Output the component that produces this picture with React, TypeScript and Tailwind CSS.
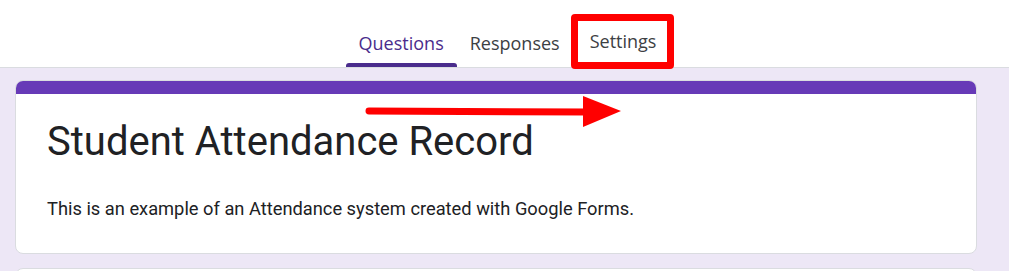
import React from 'react';

const tabs = ['Questions', 'Responses', 'Settings'];

export default function App() {
  return (
    <div className="w-[1009px] h-[271px] overflow-hidden bg-[#ede7f6] font-['Roboto',sans-serif]">
      {/* top bar with tabs */}
      <div className="h-[68px] bg-white border-b border-[#dadce0] flex justify-center items-end">
        <div className="flex items-end ml-[11px]">
          {tabs.map((t, i) => (
            <div
              key={t}
              className={
                i === 2
                  ? 'relative h-[55px] pl-[19px] pr-[18px] mb-[-2px] flex items-center justify-center'
                  : i === 1
                    ? 'relative h-[48px] pl-[13px] pr-[11px] flex items-center justify-center'
                    : 'relative h-[48px] px-[13px] flex items-center justify-center'
              }
            >
              <span
                className={
                  i === 0
                    ? "text-[18px] font-medium text-[#4a2c8c] font-['Open_Sans',sans-serif]"
                    : "text-[18px] font-medium text-[#3c4043] font-['Open_Sans',sans-serif]"
                }
              >
                {t}
              </span>
              {i === 0 && (
                <div className="absolute left-0 right-0 bottom-0 h-[4px] rounded-t-[3px] bg-[#4a2c8c]" />
              )}
              {i === 2 && (
                <div className="absolute inset-0 border-[7px] border-[#ff0000] rounded-[4px]" />
              )}
            </div>
          ))}
        </div>
      </div>

      {/* form header card */}
      <div className="relative mt-[12px] ml-[15px] w-[962px] rounded-[8px] overflow-hidden border border-[#dadce0] bg-white">
        <div className="h-[13px] bg-[#673ab7]" />
        <div className="px-[31px] pt-[24px] pb-[33px]">
          <h1 className="text-[40px] leading-[48px] text-[#202124] font-normal">Student Attendance Record</h1>
          <p className="mt-[32px] text-[18.3px] leading-[22px] text-[#202124]">
            This is an example of an Attendance system created with Google Forms.
          </p>
        </div>
        {/* annotation arrow */}
        <svg className="absolute left-[347px] top-[14px]" width="260" height="34" viewBox="0 0 260 34">
          <line x1="6" y1="16" x2="225" y2="17" stroke="#ff0000" strokeWidth="7" strokeLinecap="round" />
          <polygon points="220,1 258,16 220,32" fill="#ff0000" />
        </svg>
      </div>

      {/* next card peeking */}
      <div className="mt-[14px] ml-[15px] w-[962px] h-[40px] rounded-[8px] border border-[#dadce0] bg-white" />
    </div>
  );
}
